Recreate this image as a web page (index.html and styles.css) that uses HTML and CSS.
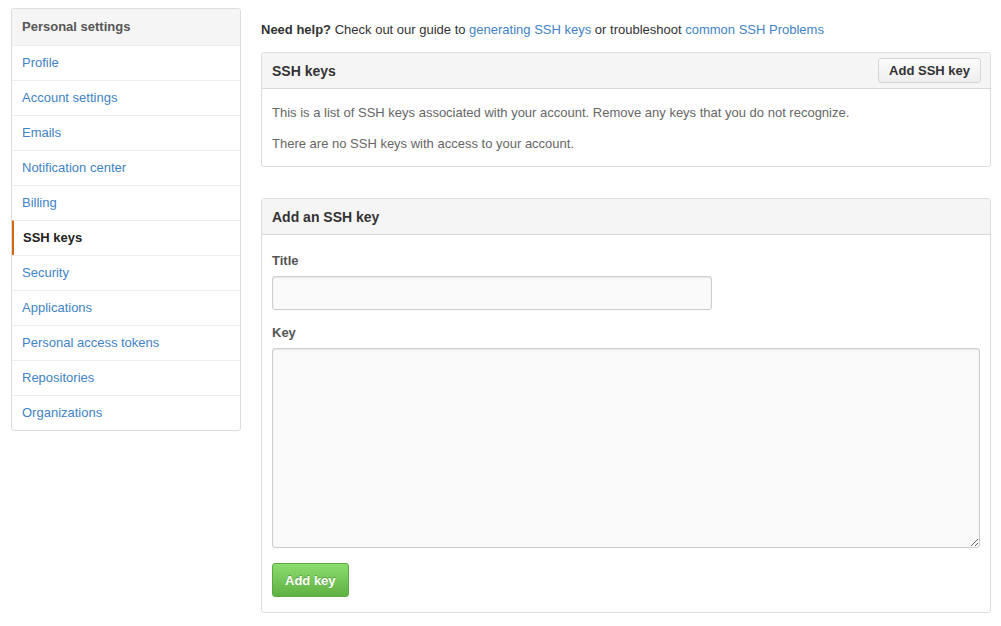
FILE: index.html
```html
<!DOCTYPE html>
<html lang="en">
<head>
    <meta charset="UTF-8">
    <title>SSH keys</title>
    <link rel="stylesheet" href="styles.css">
</head>
<body>
    <div class="page">
        <!-- Settings menu -->
        <nav class="menu">
            <h3 class="menu-heading">Personal settings</h3>
            <a href="#">Profile</a>
            <a href="#">Account settings</a>
            <a href="#">Emails</a>
            <a href="#">Notification center</a>
            <a href="#">Billing</a>
            <a href="#" class="selected">SSH keys</a>
            <a href="#">Security</a>
            <a href="#">Applications</a>
            <a href="#">Personal access tokens</a>
            <a href="#">Repositories</a>
            <a href="#">Organizations</a>
        </nav>

        <div class="main">
            <p class="help"><strong>Need help?</strong> Check out our guide to <a href="#">generating SSH keys</a> or troubleshoot <a href="#">common SSH Problems</a></p>

            <!-- Key list -->
            <div class="boxed-group">
                <div class="boxed-header">
                    <h3>SSH keys</h3>
                    <button class="btn">Add SSH key</button>
                </div>
                <div class="boxed-inner key-list">
                    <p>This is a list of SSH keys associated with your account. Remove any keys that you do not recognize.</p>
                    <p>There are no SSH keys with access to your account.</p>
                </div>
            </div>

            <!-- New key form -->
            <div class="boxed-group">
                <div class="boxed-header">
                    <h3>Add an SSH key</h3>
                </div>
                <form class="boxed-inner">
                    <label for="key-title">Title</label>
                    <input type="text" id="key-title" class="title-input">
                    <label for="key-body">Key</label>
                    <textarea id="key-body"></textarea>
                    <button type="button" class="btn btn-primary">Add key</button>
                </form>
            </div>
        </div>
    </div>
</body>
</html>
```

FILE: styles.css
```css
body {
    font-family: "Liberation Sans", Arial, sans-serif;
    font-size: 13px;
    line-height: 18px;
    margin: 0;
    color: #333;
    background: #fff;
}
a {
    color: #4183c4;
    text-decoration: none;
}
.page {
    display: flex;
    align-items: flex-start;
    gap: 20px;
    padding: 8px 10px 0 11px;
}
.menu {
    width: 228px;
    flex-shrink: 0;
    border: 1px solid #ddd;
    border-radius: 3px;
    overflow: hidden;
}
.menu-heading {
    margin: 0;
    padding: 9px 10px;
    font-size: 13px;
    line-height: 18px;
    color: #555;
    background: #f5f5f5;
}
.menu a {
    display: block;
    padding: 8px 10px;
    border-top: 1px solid #eee;
}
.menu a.selected {
    color: #222;
    font-weight: bold;
    border-left: 2px solid #d26911;
    padding-left: 9px;
}
.main {
    width: 730px;
}
.help {
    margin: 13px 0 13px;
}
.boxed-group {
    border: 1px solid #ddd;
    border-radius: 3px;
    margin-bottom: 31px;
}
.boxed-header {
    display: flex;
    align-items: center;
    justify-content: space-between;
    height: 35px;
    padding: 0 9px 0 10px;
    background: #f5f5f5;
    border-bottom: 1px solid #d8d8d8;
}
.boxed-header h3 {
    margin: 0;
    font-size: 14px;
    color: #333;
}
.boxed-inner {
    display: block;
    padding: 14px 10px 15px;
    color: #666;
}
.key-list {
    padding: 15px 10px 13px;
}
.boxed-inner p {
    margin: 0 0 13px;
}
.boxed-inner p:last-child {
    margin-bottom: 0;
}
.btn {
    height: 25px;
    padding: 0 10px;
    font-family: inherit;
    font-size: 13px;
    font-weight: bold;
    color: #333;
    background: linear-gradient(#fcfcfc, #eee);
    border: 1px solid #d5d5d5;
    border-radius: 3px;
    cursor: pointer;
}
.boxed-inner label {
    display: block;
    margin-top: 3px;
    margin-bottom: 6px;
    font-weight: bold;
    color: #555;
}
.boxed-inner input,
.boxed-inner textarea {
    display: block;
    box-sizing: border-box;
    padding: 7px 8px;
    font-family: inherit;
    font-size: 13px;
    background: #fafafa;
    border: 1px solid #ccc;
    border-radius: 3px;
    box-shadow: inset 0 1px 2px rgba(0, 0, 0, 0.075);
    outline: none;
}
.title-input {
    width: 440px;
    height: 34px;
    margin-bottom: 14px;
}
.boxed-inner textarea {
    width: 100%;
    height: 200px;
    margin-bottom: 15px;
}
.btn-primary {
    height: 34px;
    padding: 0 12px;
    color: #fff;
    text-shadow: 0 -1px 0 rgba(0, 0, 0, 0.25);
    background: linear-gradient(#8add6d, #60b044);
    border-color: #5ca941;
}
```
